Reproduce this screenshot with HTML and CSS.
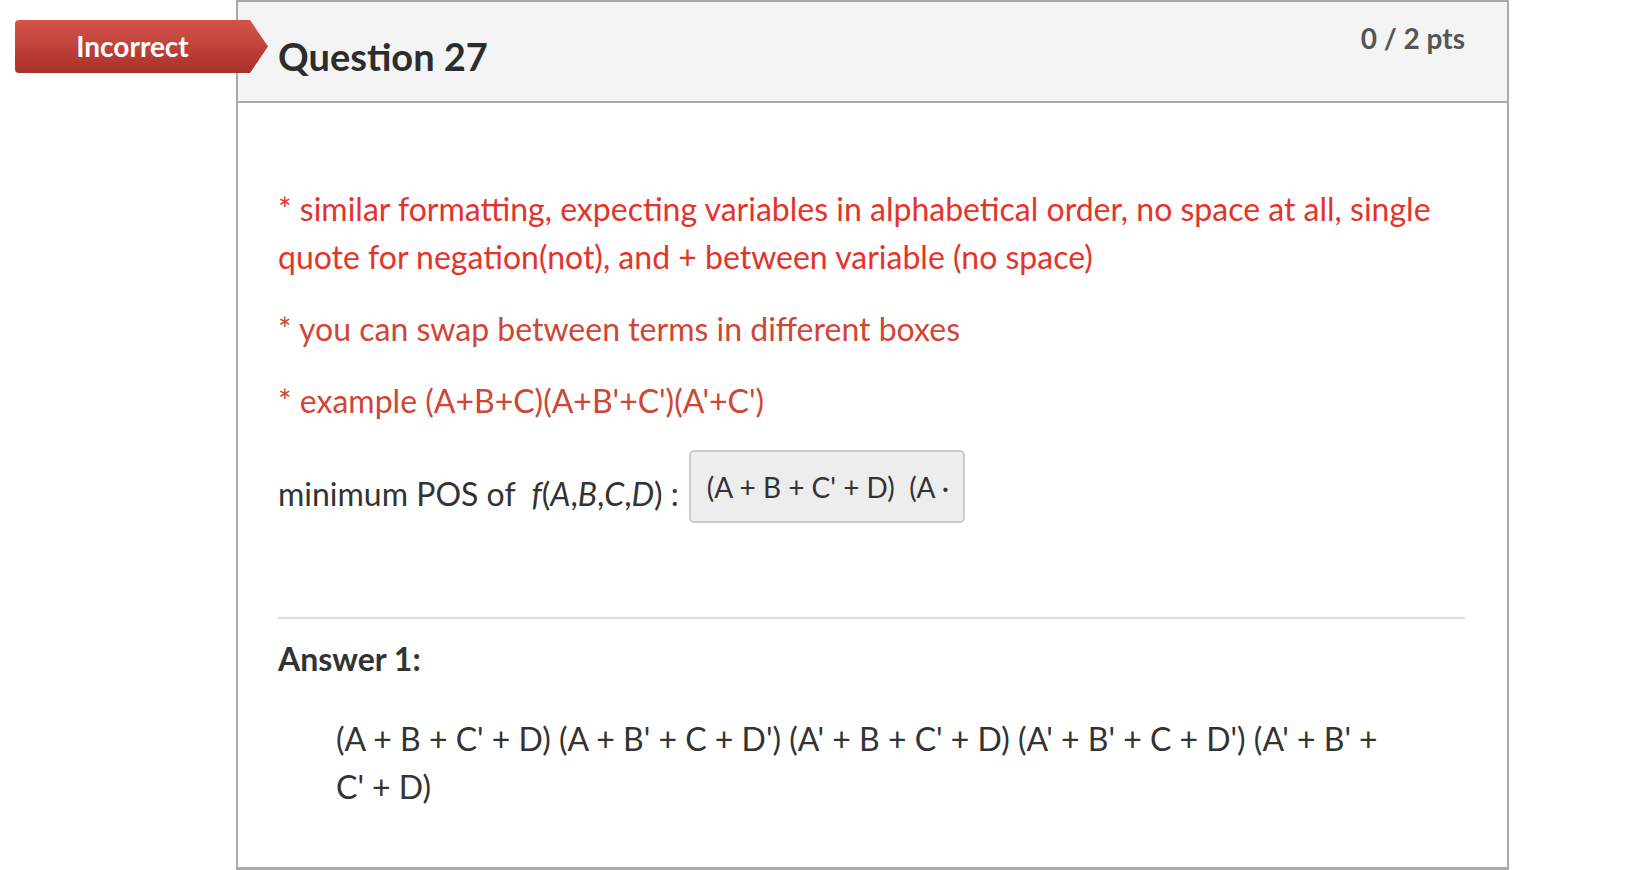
FILE: index.html
```html
<!DOCTYPE html>
<html lang="en">

<head>
  <meta charset="UTF-8" />
  <meta name="viewport" content="width=device-width, initial-scale=1.0" />
  <title>Question 27</title>
  <link rel="stylesheet" href="styles.css">
</head>

<body>
  <div class="quiz">
    <div class="badge">Incorrect</div>
    <div class="question">
      <div class="question-header">
        <h2>Question 27</h2>
        <div class="points">0 / 2 pts</div>
      </div>
      <div class="question-body">
        <p class="note note-bright">* similar formatting, expecting variables in alphabetical order, no space at all, single quote for negation(not), and + between variable (no space)</p>
        <p class="note">* you can swap between terms in different boxes</p>
        <p class="note">* example (A+B+C)(A+B'+C')(A'+C')</p>
        <div class="prompt">
          <span class="prompt-label">minimum POS of&nbsp; <em>f</em>(<em>A</em>,<em>B</em>,<em>C</em>,<em>D</em>) :</span>
          <span class="answer-box">(A + B + C' + D)&nbsp; (A ·</span>
        </div>
        <hr class="divider" />
        <div class="answer-label">Answer 1:</div>
        <div class="answer-text">(A + B + C' + D) (A + B' + C + D') (A' + B + C' + D) (A' + B' + C + D') (A' + B' + C' + D)</div>
      </div>
    </div>
  </div>
</body>

</html>
```

FILE: styles.css
```css
body {
  margin: 0;
  background: white;
  font-family: Lato, "Open Sans", Arial, sans-serif;
  color: #333;
}

.quiz {
  position: relative;
  padding-left: 236px;
  width: 1273px;
}

.badge {
  position: absolute;
  left: 15px;
  top: 20px;
  width: 235px;
  height: 53px;
  padding-right: 18px;
  line-height: 53px;
  text-align: center;
  color: white;
  font-size: 28px;
  font-weight: bold;
  background: linear-gradient(#d4544b, #a9302a);
  border-radius: 4px 0 0 4px;
  clip-path: polygon(0 0, 235px 0, 253px 50%, 235px 100%, 0 100%);
  z-index: 2;
}

.question {
  border: 2px solid #aaa;
  border-bottom-width: 3px;
}

.question-header {
  display: flex;
  justify-content: space-between;
  align-items: flex-start;
  height: 99px;
  padding: 0 42px 0 40px;
  background: #f4f4f4;
  border-bottom: 2px solid #aaa;
}

.question-header h2 {
  margin: 31px 0 0;
  font-size: 38px;
  font-weight: bold;
  color: #2d2d2d;
}

.points {
  margin-top: 19px;
  font-size: 28px;
  font-weight: bold;
  color: #555;
}

.question-body {
  padding: 82px 42px 56px 40px;
  font-size: 32px;
  line-height: 48px;
}

.note {
  margin: 0 0 24px;
  color: #cf4636;
}

.note-bright {
  color: #e3342b;
}

.prompt {
  display: flex;
  align-items: center;
  gap: 10px;
  margin-top: 25px;
  color: #333;
}

.prompt-label {
  padding-top: 14px;
}

.answer-box {
  width: 276px;
  height: 73px;
  padding: 0 16px;
  line-height: 71px;
  white-space: nowrap;
  overflow: hidden;
  background: #ededed;
  border: 2px solid #ccc;
  border-radius: 5px;
  font-size: 28px;
  box-sizing: border-box;
}

.divider {
  margin: 94px 0 0;
  border: none;
  border-top: 2px solid #ddd;
}

.answer-label {
  margin-top: 16px;
  font-weight: bold;
}

.answer-text {
  margin-top: 32px;
  padding: 0 72px 0 58px;
}
```
